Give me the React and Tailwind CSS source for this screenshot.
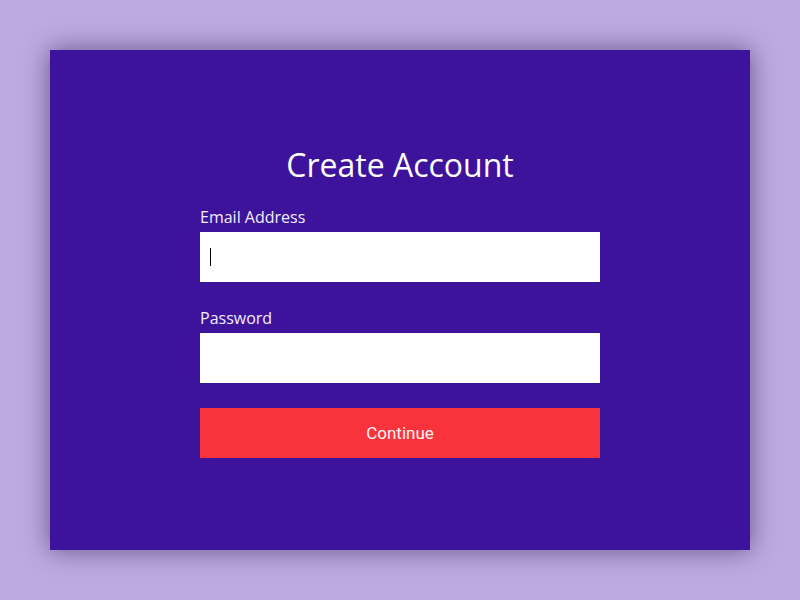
export default function App() {
  return (
    <div className="min-h-screen w-full bg-[#bdaae0] flex items-start justify-center pt-[50px]">
      <div className="w-[700px] h-[500px] bg-[#3d139c] shadow-[0_0_24px_rgba(30,10,60,0.55)]">
        <div className="w-[400px] mx-auto pt-[93px] font-['Open_Sans',sans-serif]">
          <h1 className="text-[32px] leading-[44px] text-white text-center">
            Create Account
          </h1>
          <label className="block mt-[18px] mb-[3px] text-[16px] leading-[24px] text-[#f3eefc]">
            Email Address
          </label>
          <div className="h-[50px] bg-white flex items-center pl-[10px]">
            <div className="w-[1px] h-[18px] bg-black" />
          </div>
          <label className="block mt-[24px] mb-[3px] text-[16px] leading-[24px] text-[#f3eefc]">
            Password
          </label>
          <div className="h-[50px] bg-white" />
          <button className="mt-[25px] w-full h-[50px] pt-[2px] bg-[#f8333c] text-[#fff4f4] text-[17px] font-['Roboto',sans-serif]">
            Continue
          </button>
        </div>
      </div>
    </div>
  );
}
